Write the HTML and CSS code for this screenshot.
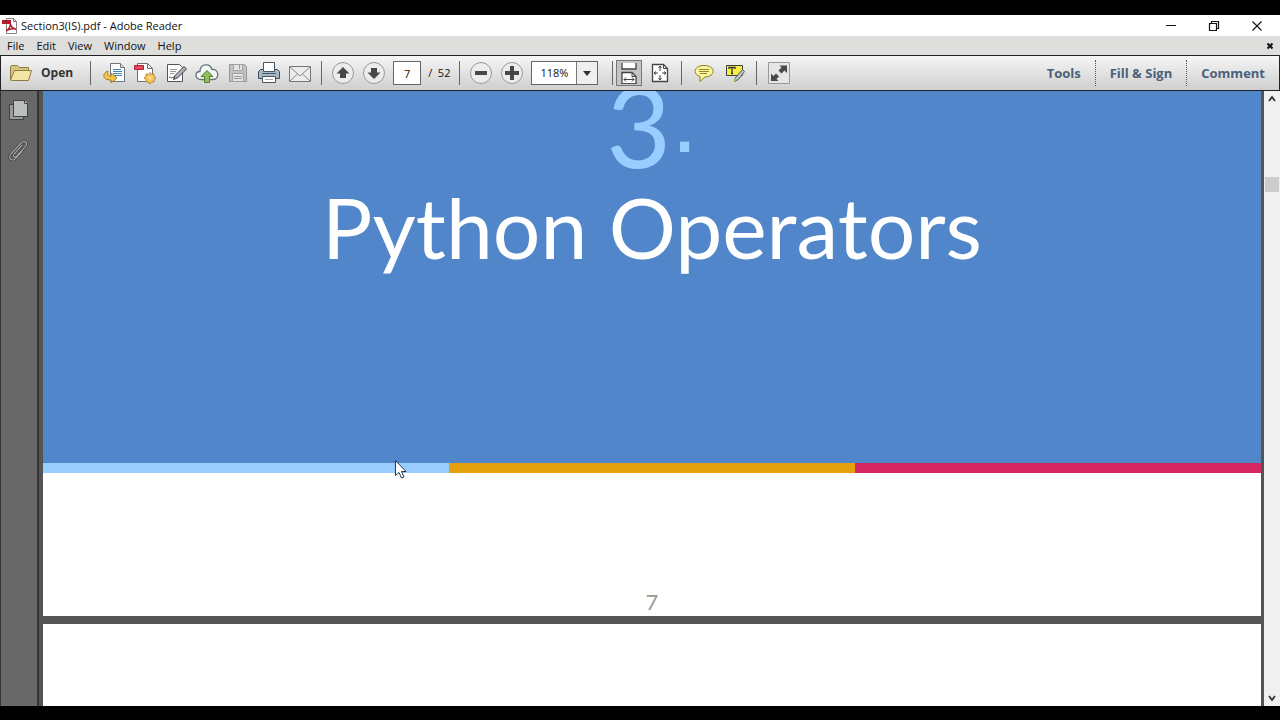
FILE: index.html
```html
<!DOCTYPE html>
<html lang="en">
<head>
<meta charset="utf-8">
<title>Section3(IS).pdf - Adobe Reader</title>
<link rel="stylesheet" href="styles.css">
</head>
<body>
<div class="app">
  <header class="titlebar">
    <svg class="app-icon" width="16" height="16" viewBox="0 0 16 16"><path d="M4.500.5h7l3 3v12h-10z" fill="#fff" stroke="#8d8080"/><path d="M11.500.5v3h3" fill="none" stroke="#777"/><path d="M0 2h9v4H0z" fill="#b01c2c"/><path d="M4 13c3-2 5-5 4-8 1 4 3 6 6 6-4-1-7 0-10 2" fill="none" stroke="#b01c2c" stroke-width="1.500"/></svg>
    <h1 class="title">Section3(IS).pdf - Adobe Reader</h1>
    <div class="window-controls">
      <button aria-label="Minimize"><svg width="12" height="12" viewBox="0 0 12 12"><path d="M1 5.500h10" stroke="#111"/></svg></button>
      <button aria-label="Restore"><svg width="12" height="12" viewBox="0 0 12 12"><path d="M1.500 3.500h7v7h-7zM3.500 3.500v-2h7v7h-2" fill="none" stroke="#111" stroke-width="1.200"/></svg></button>
      <button aria-label="Close"><svg width="12" height="12" viewBox="0 0 12 12"><path d="M1.500 1.500l9 9M10.500 1.500l-9 9" stroke="#111" stroke-width="1.100"/></svg></button>
    </div>
  </header>
  <nav class="menubar" aria-label="Menu">
    <button>File</button><button>Edit</button><button>View</button><button>Window</button><button>Help</button>
    <button class="close-doc" aria-label="Close document"><svg width="8" height="8" viewBox="0 0 8 8"><path d="M1.500 1.500l5 5M6.500 1.500l-5 5" stroke="#111" stroke-width="2"/></svg></button>
  </nav>
  <div class="toolbar">
    <button class="open"><svg width="24" height="20" viewBox="0 0 24 20"><path d="M1.500 17.500v-14l1-1h6l2 2h9v3" fill="#d9c581" stroke="#8d7b43"/><path d="M3.500 17.500l-2-.5 4-9.500h17l-3 10z" fill="#f3e5a6" stroke="#8d7b43"/></svg>Open</button>
    <span class="sep"></span>
    <div class="group">
      <button aria-label="Convert PDF"><svg width="24" height="24" viewBox="0 0 24 24"><path d="M8.500 2.500h10l4 4v14h-14z" fill="#fff" stroke="#6b737b"/><path d="M18.500 2.500v4h4" fill="#ddd" stroke="#6b737b"/><path d="M11 8.500h8M11 10.500h9M11 12.500h9M12 14.500h8" stroke="#3f86c4"/><path d="M6 10c-6 2-6 9 3 9v3l6-5-6-5v3c-3 1-4-2-3-5z" fill="#f3c64a" stroke="#a57b22"/></svg></button>
      <button aria-label="Create PDF"><svg width="24" height="24" viewBox="0 0 24 24"><path d="M4.500 2.500h10l5 5v13h-15z" fill="#fff" stroke="#6b737b"/><path d="M14.500 2.500v5h5" fill="none" stroke="#6b737b"/><path d="M1.500 4.500h9v4h-9z" fill="#e64a61" stroke="#b51f38"/><path d="M17 11.500l1.500 2 2.500-.5v2.500l2 1.500-2 1.500v2.500h-2.500L17 23l-1.500-2H13v-2.500L11 17l2-1.500V13l2.500.5z" fill="#f5c75d" stroke="#bd8a2d"/><circle cx="17" cy="17" r="1.500" fill="#fbe3a0"/></svg></button>
      <button aria-label="Sign document"><svg width="24" height="24" viewBox="0 0 24 24"><path d="M3.500 3.500h12l3 3v14h-15z" fill="#fff" stroke="#555"/><path d="M6 8.500h7M6 10.500h6M6 12.500h4" stroke="#999"/><path d="M5 17c2-3 2 2 4-1l2 1" fill="none" stroke="#444"/><path d="M20 5.500l2.500 2.500-9 9-4 1.500 1.500-4z" fill="#aab3bb" stroke="#3c3f43"/></svg></button>
      <button aria-label="Upload"><svg width="24" height="24" viewBox="0 0 24 24"><path d="M6 18.500c-6 0-7-8-1-8 0-8 10-9 12-2 7-1 8 10 1 10z" fill="#f4f7f8" stroke="#687178" stroke-width="1.300"/><path d="M12 9.500l6 6h-3.500v6h-5v-6H6z" fill="#8fbe5b" stroke="#547e2e"/></svg></button>
      <button aria-label="Save" disabled><svg width="24" height="24" viewBox="0 0 24 24"><path d="M3.500 3.500h15l2 2v15h-17z" fill="#c2c2c2" stroke="#979797"/><path d="M7.500 3.500h9v6h-9zM6.500 12.500h11v8h-11z" fill="#e4e4e4" stroke="#a2a2a2"/><path d="M13.500 4v4M8 15.500h8M8 17.500h8" stroke="#999"/></svg></button>
      <button aria-label="Print"><svg width="24" height="24" viewBox="0 0 24 24"><path d="M3.500 8.500h17l2 2v7h-21v-7z" fill="#a5b8c5" stroke="#3c4b57"/><path d="M6.500 1.500h11v9h-11z" fill="#fff" stroke="#4d565e"/><path d="M5 12.500h14" stroke="#4d5b66"/><path d="M5.500 15.500h13v6h-13z" fill="#fff" stroke="#4d565e"/><path d="M8 18.500h8" stroke="#aaa"/></svg></button>
      <button aria-label="E-mail"><svg width="24" height="24" viewBox="0 0 24 24"><path d="M1.500 5.500h21v15h-21z" fill="#ececec" stroke="#777"/><path d="M2 6l10 9L22 6M2 20l7.500-7M22 20l-7.500-7" fill="none" stroke="#888"/></svg></button>
    </div>
    <span class="sep"></span>
    <div class="group">
      <button aria-label="Previous page"><svg width="24" height="24" viewBox="0 0 24 24"><circle class="ring" cx="12" cy="12" r="10.500"/><path d="M12 6l6.500 6.500H15V17H9v-4.500H5.500z" fill="#484848"/></svg></button>
      <button aria-label="Next page"><svg width="24" height="24" viewBox="0 0 24 24"><circle class="ring" cx="12" cy="12" r="10.500"/><path d="M12 18l6.500-6.500H15V7H9v4.500H5.500z" fill="#484848"/></svg></button>
      <input class="page-no" aria-label="Page number" value="7">
      <span class="page-total">/&nbsp; 52</span>
    </div>
    <span class="sep"></span>
    <div class="group">
      <button aria-label="Zoom out"><svg width="24" height="24" viewBox="0 0 24 24"><circle class="ring" cx="12" cy="12" r="10.500"/><path d="M6 10h12v4H6z" fill="#484848"/></svg></button>
      <button aria-label="Zoom in"><svg width="24" height="24" viewBox="0 0 24 24"><circle class="ring" cx="12" cy="12" r="10.500"/><path d="M10 5h4v5h5v4h-5v5h-4v-5H5v-4h5z" fill="#484848"/></svg></button>
      <div class="zoom">
        <input aria-label="Zoom" value="118%">
        <button aria-label="Zoom levels"><svg width="8" height="5" viewBox="0 0 8 5"><path d="M0 0h8L4 5z" fill="#333"/></svg></button>
      </div>
    </div>
    <span class="sep wide"></span>
    <div class="group">
      <button class="pressed" aria-label="Fit width"><svg width="24" height="24" viewBox="0 0 24 24"><path d="M5 2v6h14V2" fill="#fff" stroke="#444" stroke-width="1.300"/><path d="M5 22V11.500h10l4 4V22" fill="#fff" stroke="#444" stroke-width="1.300"/><path d="M15 11.500v4h4M7 18.500h10M9 16.500l-2 2 2 2M15 16.500l2 2-2 2" fill="none" stroke="#444"/><path d="M4 22.500h16" stroke="#555"/></svg></button>
      <button aria-label="Fit page"><svg width="24" height="24" viewBox="0 0 24 24"><path d="M4.500 3.500h11l4 4v13h-15z" fill="#fff" stroke="#444" stroke-width="1.300"/><path d="M15.500 3.500v4h4M12 5v5M12 14v5M6 12h4M14 12h4M10.500 7L12 5l1.500 2M10.500 17l1.500 2 1.500-2M8 10.500L6 12l2 1.500M16 10.500l2 1.500-2 1.500" fill="none" stroke="#444"/></svg></button>
    </div>
    <span class="sep"></span>
    <div class="group">
      <button aria-label="Add sticky note"><svg width="24" height="24" viewBox="0 0 24 24"><path d="M12 4.500c12 0 12 11 1 11.500L8 20.500V15.500C0 13 2 4.500 12 4.500z" fill="#fbf69a" stroke="#85812f"/><path d="M7 8.500h10M7 10.500h10M8 12.500h7" stroke="#8d8738"/></svg></button>
      <button aria-label="Highlight text"><svg width="24" height="24" viewBox="0 0 24 24"><path d="M3.500 4.500h16v10h-16z" fill="#f7ef45" stroke="#3d3d31"/><path d="M6 8V6.500h6V8M9 6.500v6M8 12.500h2" fill="none" stroke="#333" stroke-width="1.300"/><path d="M19.500 8.500l2 2-6 8-4 2 1-4z" fill="#b9c1c4" stroke="#545a60"/><path d="M12 17l-1.500 4 3.500-2z" fill="#a9c94e"/></svg></button>
    </div>
    <span class="sep"></span>
    <button aria-label="Read mode"><svg width="24" height="24" viewBox="0 0 24 24"><path d="M1.500 1.500h21v21h-21z" fill="#e6e6e6" stroke="#999"/><path d="M12.500 4.500H20V12l-2.500-2.500-3 3-3-3 3-3zM4 12.500l2.500 2.500 2.500-2.500 3 3L9.500 18l2 2H4z" fill="#4a4a4a"/></svg></button>
    <div class="panes"><button>Tools</button><button>Fill &amp; Sign</button><button>Comment</button></div>
  </div>
  <div class="workspace">
    <aside class="rail">
      <button aria-label="Page thumbnails"><svg width="24" height="24" viewBox="0 0 24 24"><path d="M3.500 6.500h14v15h-14z" fill="#989c9e" stroke="#3f4142"/><path d="M7.500 2.500h11l3 3v13h-14z" fill="#b9bebf" stroke="#3f4142"/><path d="M18.500 2.500v3h3" fill="#ddd" stroke="#3f4142"/></svg></button>
      <button aria-label="Attachments"><svg width="24" height="24" viewBox="0 0 24 24"><g fill="none" stroke-linecap="round"><path d="M16 7l-8 9c-2 3 1 4 3 2l9-10c2-4-2-6-5-3L5 16c-4 5 2 8 5 4l6-7" stroke="#333" stroke-width="2.500"/><path d="M16 7l-8 9c-2 3 1 4 3 2l9-10c2-4-2-6-5-3L5 16c-4 5 2 8 5 4l6-7" stroke="#aaa" stroke-width="1.200"/></g></svg></button>
    </aside>
    <main class="document">
      <section class="page">
        <div class="slide">
          <p class="number">3<span class="dot">.</span></p>
          <h2>Python Operators</h2>
        </div>
        <div class="stripe"><i></i><i></i><i></i></div>
        <footer>7</footer>
      </section>
      <section class="page next"></section>
      <svg class="cursor" width="14" height="20" viewBox="0 0 14 20"><path d="M1.500 1.500v15l3.500-3 2.500 5.500 2.500-1-2.500-5.500h4.500z" fill="#fff" stroke="#26384c"/></svg>
    </main>
    <div class="scrollbar">
      <button aria-label="Scroll up"><svg width="8" height="8" viewBox="0 0 8 8"><path d="M1 6l3-4 3 4" fill="none" stroke="#333" stroke-width="1.800"/></svg></button>
      <div class="track"><div class="thumb"></div></div>
      <button aria-label="Scroll down"><svg width="8" height="8" viewBox="0 0 8 8"><path d="M1 2l3 4 3-4" fill="none" stroke="#333" stroke-width="1.800"/></svg></button>
    </div>
  </div>
</div>
</body>
</html>
```

FILE: styles.css
```css
* { box-sizing: border-box; }
body {
  margin: 0;
  background: #000;
  color: #111;
  font: 11px/16px "Open Sans", "Noto Sans", sans-serif;
}
button, input { font: inherit; color: inherit; }
button {
  display: flex;
  align-items: center;
  justify-content: center;
  padding: 0;
  border: 0;
  background: none;
}
svg { display: block; flex: none; }

.app {
  display: flex;
  flex-direction: column;
  height: 100vh;
  padding: 15px 0 14px;
}

.titlebar {
  display: flex;
  align-items: center;
  height: 21px;
  padding: 0 2px;
  gap: 3px;
  background: #fff;
}
.title { margin: 0; font-size: 11px; font-weight: 400; }
.window-controls { display: flex; margin-left: auto; }
.window-controls button { width: 43px; height: 20px; }

.menubar {
  display: flex;
  align-items: center;
  height: 19px;
  padding: 0 6px 0 7px;
  gap: 12px;
  background: #dededd;
}
.close-doc { margin-left: auto; }

.toolbar {
  display: flex;
  align-items: center;
  height: 36px;
  padding-left: 8px;
  border: 1px solid #222;
  background: linear-gradient(#f6f6f6, #e4e4e4 45%, #cfcfcf);
}
.open { gap: 8px; font-size: 12px; font-weight: 700; color: #333; }
.sep { width: 1px; height: 24px; margin: 0 9px; background: #666; }
.open + .sep { margin: 0 11px 0 17px; }
.sep.wide { margin: 0 4px 0 14px; }
.wide ~ .sep { margin: 0 10px 0 9px; }
.group { display: flex; align-items: center; gap: 7px; }
.ring { fill: #ececec; stroke: #999; }
.page-no, .zoom {
  height: 24px;
  border: 1px solid #666;
  background: #fff;
}
.page-no { width: 28px; padding: 0; text-align: center; }
.page-total { white-space: nowrap; }
.zoom { display: flex; width: 67px; }
.zoom input { flex: 1; min-width: 0; padding: 0; border: 0; text-align: center; }
.zoom button { width: 21px; border-left: 1px solid #777; background: #efefef; }
.pressed { outline: 1px solid #777; background: #c4c4c4; }
.panes { display: flex; margin-left: auto; }
.panes button {
  height: 26px;
  padding: 0 14px;
  font-size: 13px;
  font-weight: 700;
  color: #4b6179;
}
.panes button + button { border-left: 1px dotted #555; }

.workspace { display: flex; flex: 1; min-height: 0; }
.rail {
  display: flex;
  flex-direction: column;
  align-items: center;
  gap: 16px;
  width: 39px;
  padding: 7px 3px 0 0;
  border-left: 1px solid #333;
  border-right: 2px solid #333;
  background: #686868;
}
.document {
  position: relative;
  display: flex;
  flex: 1;
  flex-direction: column;
  gap: 8px;
  min-width: 0;
  padding: 0 3px 0 4px;
  background: #545454;
  overflow: hidden;
}
.page { flex: none; background: #fff; }
.page.next { flex: 1; }
.slide {
  height: 372px;
  background: #5186ca;
  color: #fff;
  font-family: Lato, sans-serif;
  text-align: center;
  overflow: hidden;
}
.number {
  height: 92px;
  margin: -14px 0 0;
  color: #99ccff;
  font-size: 112px;
  line-height: 96px;
}
.dot {
  font-family: "Liberation Sans", sans-serif;
  font-size: 96px;
  line-height: 0;
  vertical-align: 16px;
}
.slide h2 { margin: 10px 0 0; font-size: 84px; font-weight: 400; line-height: 96px; }
.stripe { display: grid; grid-template-columns: 1fr 1fr 1fr; height: 10px; }
.stripe i { background: #99ccff; }
.stripe i:nth-child(2) { background: #e5a00d; }
.stripe i:nth-child(3) { background: #d62762; }
.page footer {
  padding-top: 115px;
  padding-bottom: 1px;
  color: #999;
  font: 22px/27px Lato, sans-serif;
  text-align: center;
}
.cursor { position: absolute; left: 355px; top: 368px; }

.scrollbar {
  display: flex;
  flex-direction: column;
  width: 16px;
  background: #f0f0f0;
}
.scrollbar button { height: 16px; }
.track { flex: 1; padding: 70px 1px 0; }
.thumb { height: 15px; background: #cdcdcd; }
```
